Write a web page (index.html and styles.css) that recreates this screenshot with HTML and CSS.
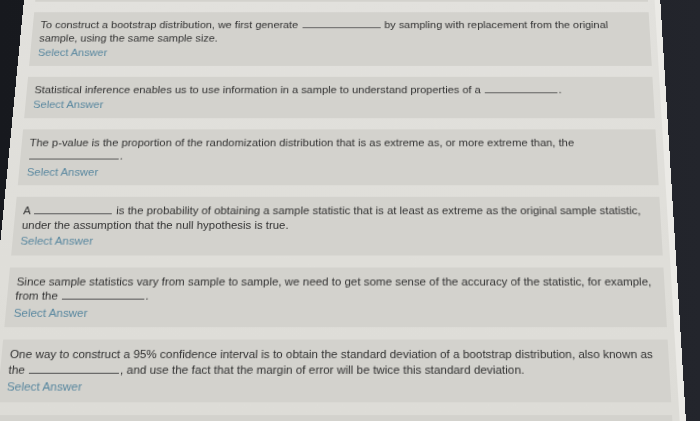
FILE: index.html
```html
<!DOCTYPE html>
<html lang="en">
<head>
<meta charset="utf-8">
<title>Quiz</title>
<link rel="stylesheet" href="styles.css">
</head>
<body>
<div class="screen">
  <div class="page">
    <div class="card stub"></div>
    <div class="card">
      <p class="q">To construct a bootstrap distribution, we first generate <span class="blank b1"></span> by sampling with replacement from the original sample, using the same sample size.</p>
      <a class="sel">Select Answer</a>
    </div>
    <div class="card">
      <p class="q">Statistical inference enables us to use information in a sample to understand properties of a <span class="blank b2"></span>.</p>
      <a class="sel">Select Answer</a>
    </div>
    <div class="card">
      <p class="q">The p-value is the proportion of the randomization distribution that is as extreme as, or more extreme than, the <span class="blank b3"></span>.</p>
      <a class="sel">Select Answer</a>
    </div>
    <div class="card">
      <p class="q">A <span class="blank b4"></span> is the probability of obtaining a sample statistic that is at least as extreme as the original sample statistic, under the assumption that the null hypothesis is true.</p>
      <a class="sel">Select Answer</a>
    </div>
    <div class="card">
      <p class="q">Since sample statistics vary from sample to sample, we need to get some sense of the accuracy of the statistic, for example, from the <span class="blank b5"></span>.</p>
      <a class="sel">Select Answer</a>
    </div>
    <div class="card">
      <p class="q">One way to construct a 95% confidence interval is to obtain the standard deviation of a bootstrap distribution, also known as the <span class="blank b6"></span>, and use the fact that the margin of error will be twice this standard deviation.</p>
      <a class="sel">Select Answer</a>
    </div>
    <div class="card stub"></div>
  </div>
</div>
</body>
</html>
```

FILE: styles.css
```css
html, body {
  margin: 0;
  height: 421px;
  overflow: hidden;
}
body {
  background: linear-gradient(90deg, #17191e 0%, #1c1e24 50%, #23252c 100%);
  font-family: "Liberation Sans", Arial, sans-serif;
}
.screen {
  width: 672px;
  margin: -31px 0 0 2px;
  transform: perspective(900px) rotateX(12deg) skewX(-1deg);
  transform-origin: 338px 256px;
}
.page {
  background: linear-gradient(180deg, #e2e1dd 0%, #dfded9 60%, #dcdbd6 100%);
  padding: 0 7px 40px 12px;
  border-right: 6px solid #ebeae6;
}
.card {
  background: #d3d2cd;
  padding: 7px 8px;
  margin-bottom: 12px;
}
.card.stub {
  height: 15px;
  padding: 0;
}
.q {
  margin: 0;
  font-size: 11.4px;
  line-height: 14.5px;
  color: #313131;
}
.sel {
  display: block;
  margin-top: 2px;
  font-size: 11.4px;
  line-height: 14.5px;
  color: #58879f;
}
.blank {
  display: inline-block;
  height: 0;
  margin: 0 1px;
  border-bottom: 1px solid #555;
}
.b1 { width: 82px; }
.b2 { width: 75px; }
.b3 { width: 91px; }
.b4 { width: 78px; }
.b5 { width: 81px; }
.b6 { width: 87px; }
```
